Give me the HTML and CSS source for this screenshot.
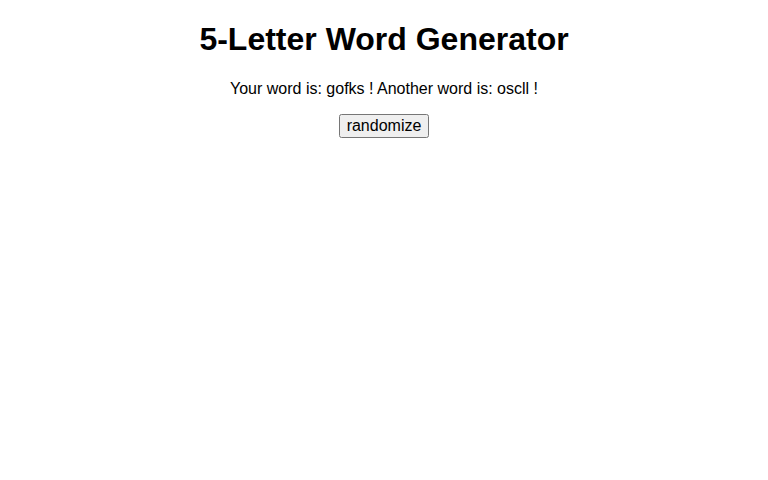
FILE: index.html
```html
<!DOCTYPE html>
<html lang="en">
<head>
  <meta charset="UTF-8">
  <title>5-Letter Word Generator</title>
  <link rel="stylesheet" href="styles.css">
</head>
<body>
  <h1>5-Letter Word Generator</h1>
  <p>Your word is: <span id="word1">gofks</span> ! Another word is: <span id="word2">oscll</span> !</p>
  <button onclick="randomize()">randomize</button>

  <script>
    const letters = "abcdefghijklmnopqrstuvwxyz";

    function makeWord() {
      let word = "";
      for (let i = 0; i < 5; i++) {
        word += letters[Math.floor(Math.random() * letters.length)];
      }
      return word;
    }

    function randomize() {
      document.getElementById("word1").innerText = makeWord();
      document.getElementById("word2").innerText = makeWord();
    }
  </script>
</body>
</html>
```

FILE: styles.css
```css
body {
  margin: 0;
  font-family: 'Liberation Sans', Arial, sans-serif;
  text-align: center;
  color: #000;
}
h1 {
  font-size: 32px;
}
p {
  font-size: 16px;
}
button {
  font-family: 'Liberation Sans', Arial, sans-serif;
  font-size: 16px;
}
```
